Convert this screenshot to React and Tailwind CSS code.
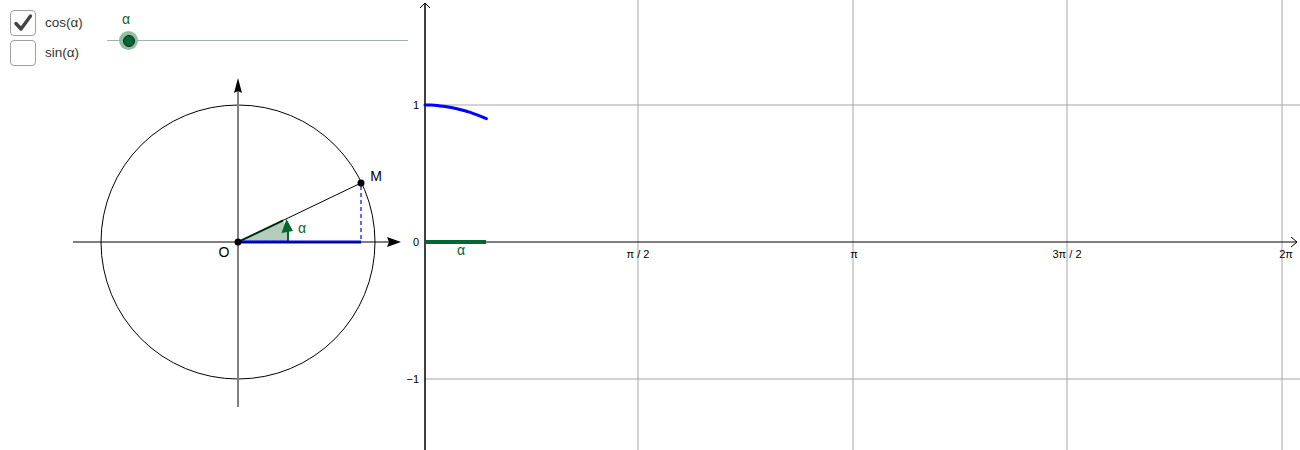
import React from 'react';

const font = { fontFamily: '"Liberation Sans", Arial, sans-serif' };
const GREEN = '#006633';

// cos curve from 0 to alpha, drawn in page coordinates
const ALPHA = 0.45;
const UNIT = 136.4;
const cosPath = () => {
  const pts = [];
  for (let i = 0; i <= 20; i++) {
    const t = (ALPHA * i) / 20;
    pts.push(`${(425 + t * UNIT).toFixed(1)},${(242 - Math.cos(t) * 137).toFixed(1)}`);
  }
  return 'M' + pts.join(' L');
};

const CheckRow = ({ checked, label }) => (
  <div className="flex items-center gap-[9px] h-[26px]">
    <div className="w-[26px] h-[26px] rounded-[4px] border-[1.5px] border-[#a0a0a0] bg-white flex items-center justify-center">
      {checked && (
        <svg width="20" height="20" viewBox="0 0 20 20">
          <path d="M3 10.5 L8 16 L17.5 3" fill="none" stroke="#444" strokeWidth="3.4" strokeLinecap="round" strokeLinejoin="round" />
        </svg>
      )}
    </div>
    <span className="text-[13.5px] text-[#333]">{label}</span>
  </div>
);

const Slider = () => (
  <div className="mt-[12px] w-[301px] shrink-0">
    <div className="text-[14px] leading-none pl-[15px]" style={{ color: GREEN }}>α</div>
    <div className="relative h-[20px]">
      <div className="absolute left-0 right-0 top-[14px] h-px bg-[#9fb3a6]" />
      <div className="absolute left-[12px] top-[5px] w-[19px] h-[19px] rounded-full bg-[#8fbf9f] flex items-center justify-center">
        <div className="w-[12px] h-[12px] rounded-full border border-[#1a1a1a] bg-[#006633]" />
      </div>
    </div>
  </div>
);

const UnitCircle = () => (
  <svg width="400" height="380" viewBox="0 70 400 380" className="block overflow-visible">
    <circle cx="238" cy="242" r="137" fill="none" stroke="#000" strokeWidth="1" />
    {/* axes */}
    <line x1="73" y1="242" x2="390" y2="242" stroke="#000" strokeWidth="1" />
    <polygon points="401,242 387,237 389,242 387,247" fill="#000" />
    <line x1="238" y1="407" x2="238" y2="90" stroke="#808080" strokeWidth="2" />
    <polygon points="238,78 234,93 238,91 242,93" fill="#000" />
    {/* angle sector */}
    <path d="M238,242 L288,242 A50,50 0 0,0 283.1,220.4 Z" fill="#b2cdba" stroke="none" />
    <line x1="238" y1="242" x2="283" y2="220.5" stroke={GREEN} strokeWidth="2" />
    <line x1="240" y1="241" x2="288" y2="241" stroke="#6a6aff" strokeWidth="1" strokeDasharray="1 1" />
    <line x1="288" y1="242" x2="288" y2="231" stroke={GREEN} strokeWidth="2" />
    <polygon points="286.5,219 281.5,233 293,231" fill={GREEN} />
    {/* radius, cos segment, projection */}
    <line x1="238" y1="242" x2="361" y2="183" stroke="#000" strokeWidth="1" />
    <line x1="238" y1="242" x2="361" y2="242" stroke="#0000ff" strokeWidth="3" />
    <line x1="238" y1="242.5" x2="361" y2="242.5" stroke="#000033" strokeWidth="1" opacity="0.6" />
    <line x1="361" y1="186" x2="361" y2="241" stroke="#6666ff" strokeWidth="2" strokeDasharray="4 3" />
    <circle cx="238" cy="242" r="3.5" fill="#000" />
    <circle cx="361" cy="183" r="3.5" fill="#000" />
    <g style={font}>
      <text x="224" y="257" fontSize="14" textAnchor="middle" fill="#000">O</text>
      <text x="376" y="181" fontSize="14" textAnchor="middle" fill="#000">M</text>
      <text x="302" y="233" fontSize="14" textAnchor="middle" fill={GREEN}>α</text>
    </g>
  </svg>
);

const Graph = () => {
  const gx = [638, 853, 1067, 1282];
  const labels = [
    { x: 638, t: 'π / 2' },
    { x: 854, t: 'π' },
    { x: 1067, t: '3π / 2' },
    { x: 1286, t: '2π' },
  ];
  return (
    <svg width="900" height="450" viewBox="400 0 900 450" className="block">
      {gx.map((x) => (
        <line key={x} x1={x} y1="0" x2={x} y2="450" stroke="#a6a6a6" strokeWidth="1" />
      ))}
      <line x1="425" y1="105" x2="1300" y2="105" stroke="#a6a6a6" strokeWidth="1" />
      <line x1="425" y1="379" x2="1300" y2="379" stroke="#a6a6a6" strokeWidth="1" />
      {/* axes */}
      <line x1="425" y1="242" x2="1297" y2="242" stroke="#000" strokeWidth="1" />
      <polyline points="1291,237 1297,242 1291,247" fill="none" stroke="#000" strokeWidth="1" />
      <line x1="425" y1="450" x2="425" y2="3" stroke="#000" strokeWidth="1.5" />
      <polyline points="420,8 425,3 430,8" fill="none" stroke="#000" strokeWidth="1" />
      <g style={font} fontSize="11" fill="#000">
        <text x="419" y="109" textAnchor="end">1</text>
        <text x="419" y="246" textAnchor="end">0</text>
        <text x="419" y="383" textAnchor="end">−1</text>
        {labels.map((l) => (
          <text key={l.t} x={l.x} y="258" textAnchor="middle">{l.t}</text>
        ))}
      </g>
      {/* cos curve + angle segment */}
      <path d={cosPath()} fill="none" stroke="#0000ff" strokeWidth="3" strokeLinecap="round" />
      <line x1="425" y1="242" x2="486" y2="242" stroke={GREEN} strokeWidth="4" />
      <text x="461" y="255" fontSize="14" textAnchor="middle" fill={GREEN} style={font}>α</text>
    </svg>
  );
};

export default function App() {
  return (
    <div className="w-[1300px] h-[450px] bg-white flex overflow-hidden" style={font}>
      <div className="w-[400px] shrink-0 flex flex-col relative z-10">
        <div className="h-[70px] flex">
          <div className="w-[107px] shrink-0 pl-[10px] pt-[10px] flex flex-col gap-[4px]">
            <CheckRow checked label="cos(α)" />
            <CheckRow label="sin(α)" />
          </div>
          <Slider />
        </div>
        <UnitCircle />
      </div>
      <Graph />
    </div>
  );
}
